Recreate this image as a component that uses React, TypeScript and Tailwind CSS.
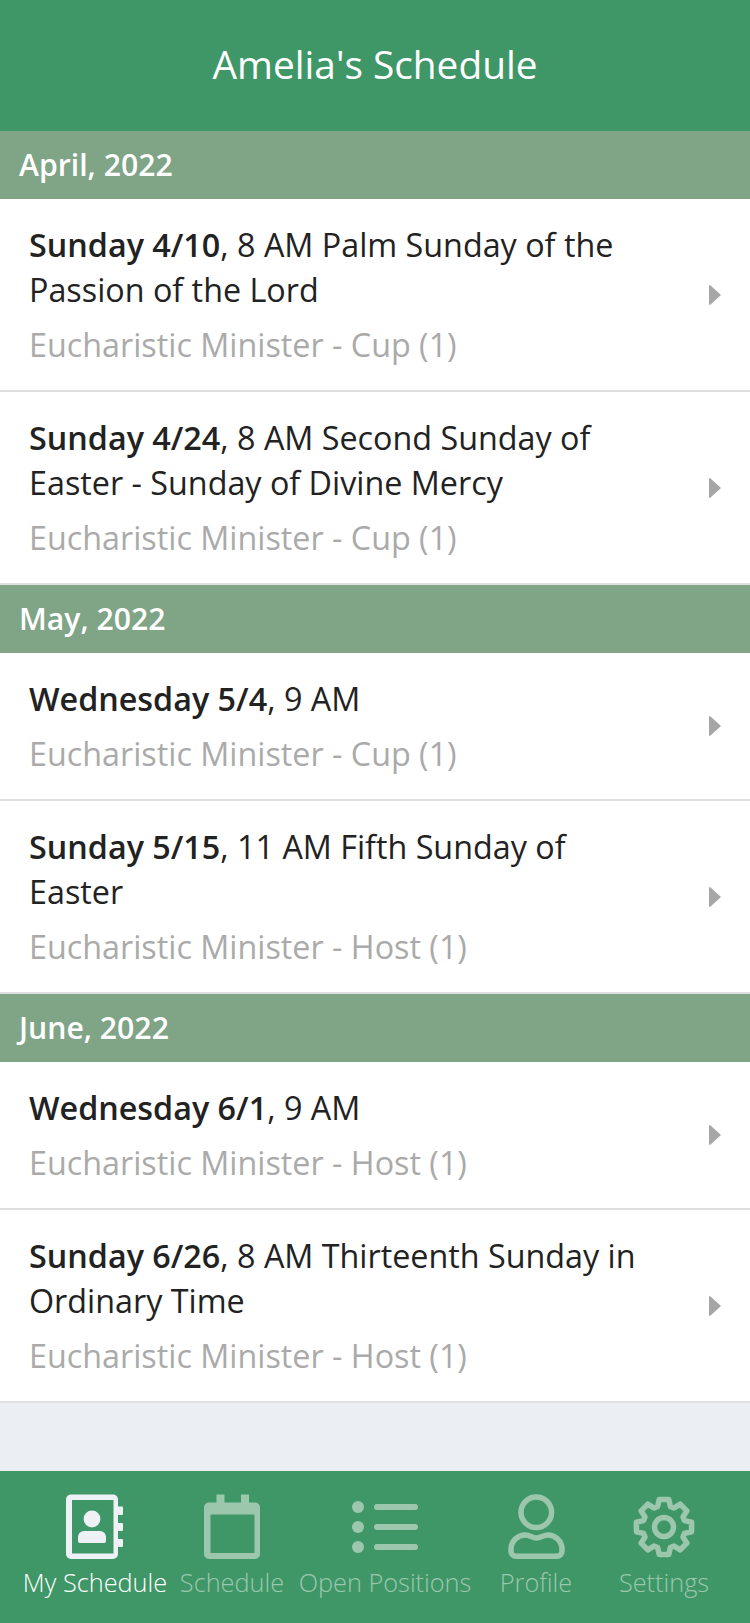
const sections = [
  {
    month: "April, 2022",
    rows: [
      { day: "Sunday 4/10", rest: ", 8 AM Palm Sunday of the", line2: "Passion of the Lord", role: "Eucharistic Minister - Cup (1)" },
      { day: "Sunday 4/24", rest: ", 8 AM Second Sunday of", line2: "Easter - Sunday of Divine Mercy", role: "Eucharistic Minister - Cup (1)" },
    ],
  },
  {
    month: "May, 2022",
    rows: [
      { day: "Wednesday 5/4", rest: ", 9 AM", role: "Eucharistic Minister - Cup (1)" },
      { day: "Sunday 5/15", rest: ", 11 AM Fifth Sunday of", line2: "Easter", role: "Eucharistic Minister - Host (1)" },
    ],
  },
  {
    month: "June, 2022",
    rows: [
      { day: "Wednesday 6/1", rest: ", 9 AM", role: "Eucharistic Minister - Host (1)" },
      { day: "Sunday 6/26", rest: ", 8 AM Thirteenth Sunday in", line2: "Ordinary Time", role: "Eucharistic Minister - Host (1)" },
    ],
  },
];

type Row = { day: string; rest: string; line2?: string; role: string };

function ScheduleRow({ row }: { row: Row }) {
  return (
    <div className="flex items-center justify-between border-b-2 border-[#dfdfdf] bg-white pl-[29px] pr-[29px] pt-[23px] pb-[23px]">
      <div>
        <p className="text-[32.3px] leading-[45px] text-[#222]">
          <span className="font-semibold">{row.day}</span>
          {row.rest}
          {row.line2 && <br />}
          {row.line2}
        </p>
        <p className="mt-[10px] text-[32.3px] leading-[45px] text-[#aaaaaa]">{row.role}</p>
      </div>
      <svg width="12" height="20" viewBox="0 0 12 20" className="text-[#a6a6a6]">
        <path d="M0 1 Q0 0 1 0 L12 10 L1 20 Q0 20 0 19 Z" fill="currentColor" />
      </svg>
    </div>
  );
}

function AddressIcon() {
  return (
    <svg width="58" height="66" viewBox="0 0 58 66" fill="currentColor">
      <path
        fillRule="evenodd"
        d="M5 0.5H47a5 5 0 0 1 5 5V60a5 5 0 0 1-5 5H5a5 5 0 0 1-5-5V5.5a5 5 0 0 1 5-5ZM6 6V59.5H47.5V6Z"
      />
      <path d="M52 12.5h4a1 1 0 0 1 1 1V20a1 1 0 0 1-1 1h-4ZM52 29h4a1 1 0 0 1 1 1v6a1 1 0 0 1-1 1h-4ZM52 45h4a1 1 0 0 1 1 1v6a1 1 0 0 1-1 1h-4Z" />
      <circle cx="26" cy="25" r="8.4" />
      <path d="M18 37H34a6 6 0 0 1 6 6v4a2 2 0 0 1-2 2H14a2 2 0 0 1-2-2V43a6 6 0 0 1 6-6Z" />
    </svg>
  );
}

function CalendarIcon() {
  return (
    <svg width="57" height="66" viewBox="0 0 57 66" fill="currentColor">
      <path
        fillRule="evenodd"
        d="M12.5 0.5H20.5V8.5H37V0.5H45V8.5H51a5 5 0 0 1 5 5V60a5 5 0 0 1-5 5H5a5 5 0 0 1-5-5V13.5a5 5 0 0 1 5-5H12.5ZM6.5 20.5V59H50.5V20.5Z"
      />
    </svg>
  );
}

function ListIcon() {
  return (
    <svg width="66" height="52" viewBox="0 0 66 52" fill="currentColor">
      <circle cx="6" cy="6" r="6" />
      <circle cx="6" cy="26" r="6" />
      <circle cx="6" cy="46" r="6" />
      <rect x="22" y="3" width="44" height="6" rx="3" />
      <rect x="22" y="23" width="44" height="6" rx="3" />
      <rect x="22" y="43" width="44" height="6" rx="3" />
    </svg>
  );
}

function ProfileIcon() {
  return (
    <svg width="57" height="66" viewBox="0 0 57 66" fill="none" stroke="currentColor" strokeWidth="5.5">
      <circle cx="28.3" cy="18.3" r="15.3" />
      <path d="M8 62.3H49a5 5 0 0 0 5-5V55C54 47 47 41 40 41C35 41 33 44 28.3 44C24 44 22 41 17 41C10 41 3 47 3 55V57.3a5 5 0 0 0 5 5Z" />
    </svg>
  );
}

// 8 blocky teeth round the centre
function gearPath() {
  const pts: string[] = [];
  for (let k = 0; k < 8; k++) {
    const a = (k * Math.PI) / 4;
    const list: [number, number][] = [
      [21.5, a - 0.3],
      [28, a - 0.17],
      [28, a + 0.17],
      [21.5, a + 0.3],
    ];
    for (const [r, t] of list) {
      pts.push(`${(31 + r * Math.sin(t)).toFixed(2)} ${(31 - r * Math.cos(t)).toFixed(2)}`);
    }
  }
  return "M" + pts.join("L") + "Z";
}

function GearIcon() {
  return (
    <svg width="62" height="62" viewBox="0 0 62 62" fill="none" stroke="currentColor" strokeWidth="5.5" strokeLinejoin="round">
      <path d={gearPath()} />
      <circle cx="31" cy="31" r="9.5" />
    </svg>
  );
}

const tabs = [
  { label: "My Schedule", icon: <AddressIcon />, w: "w-[158px]", active: true },
  { label: "Schedule", icon: <CalendarIcon />, w: "w-[116px]", active: false },
  { label: "Open Positions", icon: <ListIcon />, w: "w-[190px]", active: false },
  { label: "Profile", icon: <ProfileIcon />, w: "w-[112px]", active: false },
  { label: "Settings", icon: <GearIcon />, w: "w-[144px]", active: false },
];

export default function App() {
  return (
    <div className="flex h-[1623px] w-[750px] flex-col overflow-hidden bg-[#ebeef3] font-['Open_Sans',sans-serif]">
      <header className="flex h-[131px] shrink-0 items-center justify-center bg-[#3f9768] pb-[2px]">
        <h1 className="text-[38.8px] leading-none text-white">Amelia's Schedule</h1>
      </header>

      <main className="flex-1">
        {sections.map((section) => (
          <section key={section.month}>
            <div className="flex h-[68px] items-center bg-[#7fa486] pl-[19px] text-[30.2px] font-semibold text-white">
              {section.month}
            </div>
            {section.rows.map((row) => (
              <ScheduleRow key={row.day} row={row} />
            ))}
          </section>
        ))}
      </main>

      <nav className="flex h-[152px] shrink-0 bg-[#3f9768] pl-4 pt-[23px]">
        {tabs.map((tab) => (
          <div
            key={tab.label}
            className={`flex flex-col items-center ${tab.w} ${tab.active ? "text-[#eef1f6]" : "text-[#9cc7ad]"}`}
          >
            <div className="flex h-[66px] items-center justify-center">{tab.icon}</div>
            <span className={`mt-[6px] whitespace-nowrap text-[25.3px] font-light leading-[33px] ${tab.active ? "text-white" : ""}`}>
              {tab.label}
            </span>
          </div>
        ))}
      </nav>
    </div>
  );
}
